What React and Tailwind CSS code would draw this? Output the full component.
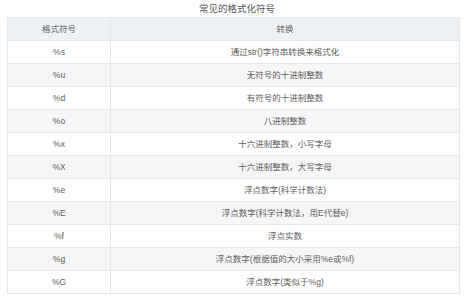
import React from 'react';

const rows = [
  ['%s', '通过str()字符串转换来格式化'],
  ['%u', '无符号的十进制整数'],
  ['%d', '有符号的十进制整数'],
  ['%o', '八进制整数'],
  ['%x', '十六进制整数，小写字母'],
  ['%X', '十六进制整数，大写字母'],
  ['%e', '浮点数字(科学计数法)'],
  ['%E', '浮点数字(科学计数法，用E代替e)'],
  ['%f', '浮点实数'],
  ['%g', '浮点数字(根据值的大小采用%e或%f)'],
  ['%G', '浮点数字(类似于%g)'],
];

const App = () => {
  return (
    <div className="w-[474px] h-[302px] bg-white overflow-hidden font-['Liberation_Sans','Noto_Sans_CJK_SC',sans-serif] text-[#606060]">
      <div className="h-[17px] flex items-center justify-center text-[9.5px] leading-none text-[#555]">
        常见的格式化符号
      </div>
      <div className="pl-[7px]">
        <table className="w-[453px] border-collapse text-[8.5px] leading-none">
          <thead>
            <tr className="h-[23px] bg-[#eef1f4]">
              <th className="w-[103px] border border-[#e4e7ea] font-normal text-center">格式符号</th>
              <th className="border border-[#e4e7ea] font-normal text-center">转换</th>
            </tr>
          </thead>
          <tbody>
            {rows.map(([sym, desc], i) => (
              <tr key={sym} className={i % 2 === 1 ? 'h-[23px] bg-[#f6f6f6]' : 'h-[23px] bg-white'}>
                <td className="border border-[#e6e6e6] text-center">{sym}</td>
                <td className="border border-[#e6e6e6] text-center">{desc}</td>
              </tr>
            ))}
          </tbody>
        </table>
      </div>
    </div>
  );
};

export default App;
